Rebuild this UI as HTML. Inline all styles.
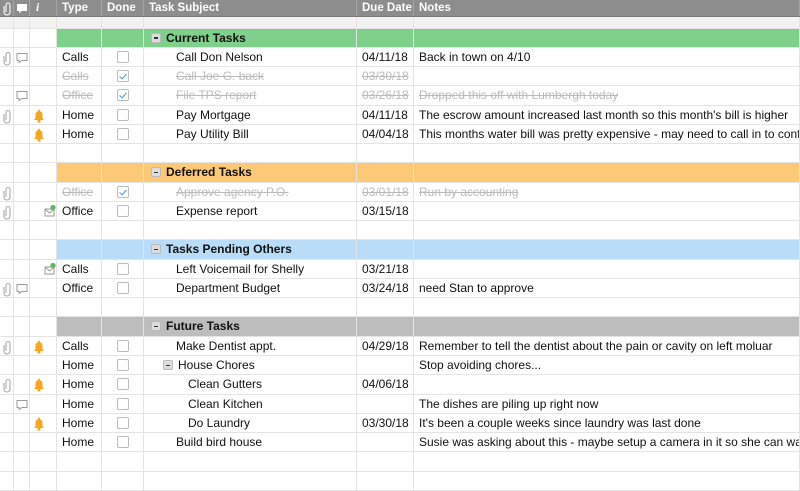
<!DOCTYPE html>
<html><head><meta charset="utf-8"><style>
*{margin:0;padding:0;box-sizing:border-box}
body{width:800px;height:480px;overflow:hidden;background:#fff;font-family:"Liberation Sans",Arial,sans-serif;font-size:12px;color:#111}
.r{display:grid;grid-template-columns:14px 16px 27px 45px 42px 213px 57px 386px;height:19.27px;border-bottom:1px solid #e4e4e4;position:relative}
.r>div{border-right:1px solid #e4e4e4;white-space:nowrap;overflow:hidden;line-height:18px;position:relative}
.h{height:17px;background:#8d8d8d;border-bottom:1px solid #7a7a7a}
.h>div{color:#fff;font-weight:bold;font-size:11.5px;line-height:16px;border-right:1px solid #a5a5a5;padding-left:5px}
.g0{height:11.5px;background:#f2f2f2}
.t{padding-left:5px}
.s{padding-left:32px}
.s2{padding-left:44px}
.d{padding-left:5px}
.n{padding-left:5px}
.x>div{color:#bbb;text-decoration:line-through}
.grp>div.c{font-weight:bold}
.cb{position:absolute;left:15px;top:3px;width:12px;height:12px;border:1px solid #bcbcbc;border-radius:2px;background:#fff}
.cb.k::after{content:"";position:absolute;left:3px;top:1px;width:3px;height:6px;border:solid #4a90d9;border-width:0 1.5px 1.5px 0;transform:rotate(40deg)}
.mn{display:inline-block;width:10px;height:10px;background:#ddd;border:1px solid #bbb;border-radius:2px;vertical-align:-1px;margin-right:5px;position:relative}
.mn::after{content:"";position:absolute;left:2px;top:3.5px;width:4px;height:1.5px;background:#333}
.ic{position:absolute;left:0;top:0}
</style></head><body>
<div class="r h"><div style="padding:0"><svg class="ic" width="14" height="17"><path d="M5 12V5a2 2 0 0 1 4 0v7a3 3 0 0 1-6 0V6" fill="none" stroke="#fff" stroke-width="1.1" transform="translate(1,0)"/></svg></div><div style="padding:0"><svg class="ic" width="16" height="17"><path d="M3 4h10v7H8l-3 2v-2H3z" fill="#fff"/></svg></div><div style="font-style:italic;font-family:'Liberation Serif',serif;padding-left:6px">i</div><div>Type</div><div>Done</div><div>Task Subject</div><div>Due Date</div><div>Notes</div></div>
<div class="r g0"><div></div><div></div><div></div><div></div><div></div><div></div><div></div><div></div></div>
<svg width="0" height="0" style="position:absolute"><defs>
<symbol id="clip" viewBox="0 0 14 19"><path d="M5 14V6.5a2 2 0 0 1 4 0V14a3 3 0 0 1-6 0V8" fill="none" stroke="#aaa" stroke-width="1.1" transform="translate(1,0)"/></symbol>
<symbol id="cm" viewBox="0 0 16 19"><path d="M3 5.5h10v7H8l-3 2v-2H3z" fill="#fff" stroke="#999" stroke-width="1"/></symbol>
<symbol id="bell" viewBox="0 0 27 19"><path d="M4 14h10l-1.5-2V8.5a3.5 3.5 0 0 0-7 0V12z" fill="#f5a623"/><circle cx="9" cy="15" r="1.6" fill="#f5a623"/><circle cx="9" cy="4.6" r="1" fill="#f5a623"/></symbol>
<symbol id="env" viewBox="0 0 27 19"><rect x="15" y="7" width="9" height="7" fill="#fff" stroke="#999"/><path d="M15 7l4.5 4 4.5-4" fill="none" stroke="#999"/><circle cx="23" cy="5.5" r="2.6" fill="#5cb85c"/></symbol>
</defs></svg>

<div class="r grp"><div></div><div></div><div></div><div style="background:#7ed08a"></div><div style="background:#7ed08a"></div><div class="c" style="background:#7ed08a;padding-left:7px"><span class="mn"></span>Current Tasks</div><div style="background:#7ed08a"></div><div style="background:#7ed08a"></div></div>
<div class="r"><div><svg class="ic" width="14" height="19"><use href="#clip"/></svg></div><div><svg class="ic" width="16" height="19"><use href="#cm"/></svg></div><div></div><div class="t">Calls</div><div><span class="cb"></span></div><div class="s">Call Don Nelson</div><div class="d">04/11/18</div><div class="n">Back in town on 4/10</div></div>
<div class="r x"><div></div><div></div><div></div><div class="t">Calls</div><div><span class="cb k"></span></div><div class="s">Call Joe G. back</div><div class="d">03/30/18</div><div class="n"></div></div>
<div class="r x"><div></div><div><svg class="ic" width="16" height="19"><use href="#cm"/></svg></div><div></div><div class="t">Office</div><div><span class="cb k"></span></div><div class="s">File TPS report</div><div class="d">03/26/18</div><div class="n">Dropped this off with Lumbergh today</div></div>
<div class="r"><div><svg class="ic" width="14" height="19"><use href="#clip"/></svg></div><div></div><div><svg class="ic" width="27" height="19"><use href="#bell"/></svg></div><div class="t">Home</div><div><span class="cb"></span></div><div class="s">Pay Mortgage</div><div class="d">04/11/18</div><div class="n">The escrow amount increased last month so this month's bill is higher</div></div>
<div class="r"><div></div><div></div><div><svg class="ic" width="27" height="19"><use href="#bell"/></svg></div><div class="t">Home</div><div><span class="cb"></span></div><div class="s">Pay Utility Bill</div><div class="d">04/04/18</div><div class="n">This months water bill was pretty expensive - may need to call in to confirm amount</div></div>
<div class="r"><div></div><div></div><div></div><div></div><div></div><div></div><div></div><div></div></div>

<div class="r grp"><div></div><div></div><div></div><div style="background:#fec976"></div><div style="background:#fec976"></div><div class="c" style="background:#fec976;padding-left:7px"><span class="mn"></span>Deferred Tasks</div><div style="background:#fec976"></div><div style="background:#fec976"></div></div>
<div class="r x"><div><svg class="ic" width="14" height="19"><use href="#clip"/></svg></div><div></div><div></div><div class="t">Office</div><div><span class="cb k"></span></div><div class="s">Approve agency P.O.</div><div class="d">03/01/18</div><div class="n">Run by accounting</div></div>
<div class="r"><div><svg class="ic" width="14" height="19"><use href="#clip"/></svg></div><div></div><div><svg class="ic" width="27" height="19"><use href="#env"/></svg></div><div class="t">Office</div><div><span class="cb"></span></div><div class="s">Expense report</div><div class="d">03/15/18</div><div class="n"></div></div>
<div class="r"><div></div><div></div><div></div><div></div><div></div><div></div><div></div><div></div></div>

<div class="r grp"><div></div><div></div><div></div><div style="background:#b9dcf8"></div><div style="background:#b9dcf8"></div><div class="c" style="background:#b9dcf8;padding-left:7px"><span class="mn"></span>Tasks Pending Others</div><div style="background:#b9dcf8"></div><div style="background:#b9dcf8"></div></div>
<div class="r"><div></div><div></div><div><svg class="ic" width="27" height="19"><use href="#env"/></svg></div><div class="t">Calls</div><div><span class="cb"></span></div><div class="s">Left Voicemail for Shelly</div><div class="d">03/21/18</div><div class="n"></div></div>
<div class="r"><div><svg class="ic" width="14" height="19"><use href="#clip"/></svg></div><div><svg class="ic" width="16" height="19"><use href="#cm"/></svg></div><div></div><div class="t">Office</div><div><span class="cb"></span></div><div class="s">Department Budget</div><div class="d">03/24/18</div><div class="n">need Stan to approve</div></div>
<div class="r"><div></div><div></div><div></div><div></div><div></div><div></div><div></div><div></div></div>

<div class="r grp"><div></div><div></div><div></div><div style="background:#bdbdbd"></div><div style="background:#bdbdbd"></div><div class="c" style="background:#bdbdbd;padding-left:7px"><span class="mn"></span>Future Tasks</div><div style="background:#bdbdbd"></div><div style="background:#bdbdbd"></div></div>
<div class="r"><div><svg class="ic" width="14" height="19"><use href="#clip"/></svg></div><div></div><div><svg class="ic" width="27" height="19"><use href="#bell"/></svg></div><div class="t">Calls</div><div><span class="cb"></span></div><div class="s">Make Dentist appt.</div><div class="d">04/29/18</div><div class="n">Remember to tell the dentist about the pain or cavity on left moluar</div></div>
<div class="r"><div></div><div></div><div></div><div class="t">Home</div><div><span class="cb"></span></div><div style="padding-left:19px"><span class="mn"></span>House Chores</div><div class="d"></div><div class="n">Stop avoiding chores...</div></div>
<div class="r"><div><svg class="ic" width="14" height="19"><use href="#clip"/></svg></div><div></div><div><svg class="ic" width="27" height="19"><use href="#bell"/></svg></div><div class="t">Home</div><div><span class="cb"></span></div><div class="s2">Clean Gutters</div><div class="d">04/06/18</div><div class="n"></div></div>
<div class="r"><div></div><div><svg class="ic" width="16" height="19"><use href="#cm"/></svg></div><div></div><div class="t">Home</div><div><span class="cb"></span></div><div class="s2">Clean Kitchen</div><div class="d"></div><div class="n">The dishes are piling up right now</div></div>
<div class="r"><div></div><div></div><div><svg class="ic" width="27" height="19"><use href="#bell"/></svg></div><div class="t">Home</div><div><span class="cb"></span></div><div class="s2">Do Laundry</div><div class="d">03/30/18</div><div class="n">It's been a couple weeks since laundry was last done</div></div>
<div class="r"><div></div><div></div><div></div><div class="t">Home</div><div><span class="cb"></span></div><div class="s">Build bird house</div><div class="d"></div><div class="n">Susie was asking about this - maybe setup a camera in it so she can watch them</div></div>
<div class="r"><div></div><div></div><div></div><div></div><div></div><div></div><div></div><div></div></div>
<div class="r"><div></div><div></div><div></div><div></div><div></div><div></div><div></div><div></div></div>
</body></html>
